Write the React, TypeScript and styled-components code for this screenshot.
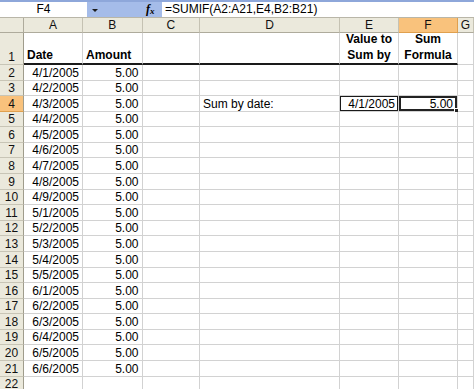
import React from 'react'
import styled, { createGlobalStyle, css } from 'styled-components'

const GlobalStyle = createGlobalStyle`
  html, body {
    margin: 0;
    padding: 0;
    background: #ffffff;
    overflow: hidden;
  }
  body {
    font-family: 'Liberation Sans', Arial, sans-serif;
    font-size: 12px;
    color: #000;
  }
`

const ROW_H = 15.58

const columns = ['A', 'B', 'C', 'D', 'E', 'F', 'G']

const dates = [
  '4/1/2005', '4/2/2005', '4/3/2005', '4/4/2005', '4/5/2005',
  '4/6/2005', '4/7/2005', '4/8/2005', '4/9/2005', '5/1/2005',
  '5/2/2005', '5/3/2005', '5/4/2005', '5/5/2005', '6/1/2005',
  '6/2/2005', '6/3/2005', '6/4/2005', '6/5/2005', '6/6/2005',
]

export default function App() {
  const rows: React.ReactNode[] = []

  // row 1: headings
  rows.push(
    <React.Fragment key='r1'>
      <RowHead>1</RowHead>
      <Cell $bold $underline>Date</Cell>
      <Cell $bold $underline>Amount</Cell>
      <Cell $underline />
      <Cell $underline />
      <Cell $bold $underline $align='center'>Value to<br />Sum by</Cell>
      <Cell $bold $underline $align='center'>Sum<br />Formula</Cell>
      <Cell />
    </React.Fragment>
  )

  dates.forEach((d, i) => {
    const n = i + 2
    const active = n === 4
    rows.push(
      <React.Fragment key={'r' + n}>
        <RowHead $active={active}>{n}</RowHead>
        <Cell $align='right'>{d}</Cell>
        <Cell $align='right'>5.00</Cell>
        <Cell />
        <Cell>{active ? 'Sum by date:' : ''}</Cell>
        <Cell $align='right' $boxed={active}>{active ? '4/1/2005' : ''}</Cell>
        <Cell $align='right' $selected={active}>
          {active ? '5.00' : ''}
          {active && <FillHandle />}
        </Cell>
        <Cell />
      </React.Fragment>
    )
  })

  rows.push(
    <React.Fragment key='r22'>
      <RowHead>22</RowHead>
      <Cell /><Cell /><Cell /><Cell /><Cell /><Cell /><Cell />
    </React.Fragment>
  )

  return (
    <Window>
      <GlobalStyle />
      <FormulaBar>
        <NameBox>F4</NameBox>
        <NameDrop>
          <Arrow />
        </NameDrop>
        <FxLabel>
          <i>f</i><span>x</span>
        </FxLabel>
        <FormulaText>=SUMIF(A2:A21,E4,B2:B21)</FormulaText>
      </FormulaBar>

      <Sheet>
        <Corner />
        {columns.map(c => (
          <ColHead key={c} $active={c === 'F'}>{c}</ColHead>
        ))}
        {rows}
      </Sheet>
    </Window>
  )
}

const Window = styled.div`
  width: 474px;
  height: 389px;
  display: flex;
  flex-direction: column;
  overflow: hidden;
`

const FormulaBar = styled.div`
  display: flex;
  height: 18px;
  box-sizing: border-box;
  border-top: 2px solid #8ea7da;
  border-bottom: 1px solid #b9b6a8;
  background: #a5bce9;
`

const NameBox = styled.div`
  width: 87px;
  background: #ffffff;
  text-align: center;
  line-height: 15px;
  font-size: 12px;
`

const NameDrop = styled.div`
  width: 54px;
  display: flex;
  align-items: center;
  padding-left: 5px;
`

const Arrow = styled.div`
  width: 0;
  height: 0;
  border-left: 3px solid transparent;
  border-right: 3px solid transparent;
  border-top: 3px solid #1b1b1b;
  margin-top: 1px;
`

const FxLabel = styled.div`
  width: 16px;
  display: flex;
  align-items: center;
  font-family: 'Liberation Serif', 'Times New Roman', serif;
  font-weight: bold;
  font-size: 12px;
  line-height: 15px;

  i {
    font-style: italic;
  }
  span {
    font-size: 9px;
    font-style: italic;
    margin-top: 3px;
  }
`

const FormulaText = styled.div`
  flex: 1;
  background: #ffffff;
  line-height: 15px;
  padding-left: 3px;
  white-space: nowrap;
`

const Sheet = styled.div`
  display: grid;
  grid-template-columns: 24px 59px 59.5px 57.5px 140px 59px 59px 1fr;
  grid-template-rows: 15px 32px repeat(21, ${ROW_H}px);
`

const headerBase = css`
  background: #ebe9dc;
  border-right: 1px solid #aeab9c;
  border-bottom: 1px solid #aeab9c;
  box-sizing: border-box;
  display: flex;
  align-items: center;
  justify-content: center;
  font-size: 12px;
  color: #111;
  overflow: hidden;
`

const Corner = styled.div`
  ${headerBase};
`

const ColHead = styled.div<{ $active?: boolean }>`
  ${headerBase};
  border-right-color: #c5c2b3;
  ${p => p.$active && css`
    background: #f9c27c;
    border-color: #e0a04e;
  `}
`

const RowHead = styled.div<{ $active?: boolean }>`
  ${headerBase};
  border-bottom-color: #c8c5b6;
  border-right-color: #9f9c8c;
  align-items: flex-end;
  line-height: 14px;
  ${p => p.$active && css`
    background: #f9c27c;
    border-bottom-color: #e0a04e;
  `}
`

const Cell = styled.div<{
  $align?: 'left' | 'center' | 'right'
  $bold?: boolean
  $underline?: boolean
  $boxed?: boolean
  $selected?: boolean
}>`
  position: relative;
  box-sizing: border-box;
  display: flex;
  align-items: flex-end;
  justify-content: ${p =>
    p.$align === 'right' ? 'flex-end' : p.$align === 'center' ? 'center' : 'flex-start'};
  text-align: ${p => p.$align || 'left'};
  padding: 0 3px;
  border-right: 1px solid #d2d2d2;
  border-bottom: 1px solid #d2d2d2;
  font-size: 12px;
  line-height: 14px;
  white-space: nowrap;
  font-weight: ${p => (p.$bold ? 'bold' : 'normal')};
  ${p => p.$underline && css`
    border-bottom: 2px solid #1a1a1a;
    line-height: 16px;
  `}
  ${p => p.$boxed && css`
    box-shadow: inset 0 0 0 1px #1a1a1a;
  `}
  ${p => p.$selected && css`
    box-shadow: inset 0 0 0 2px #222;
    padding-right: 4px;
  `}
`

const FillHandle = styled.div`
  position: absolute;
  right: -2px;
  bottom: -2px;
  width: 5px;
  height: 5px;
  background: #222;
  border: 1px solid #fff;
  box-sizing: border-box;
`
